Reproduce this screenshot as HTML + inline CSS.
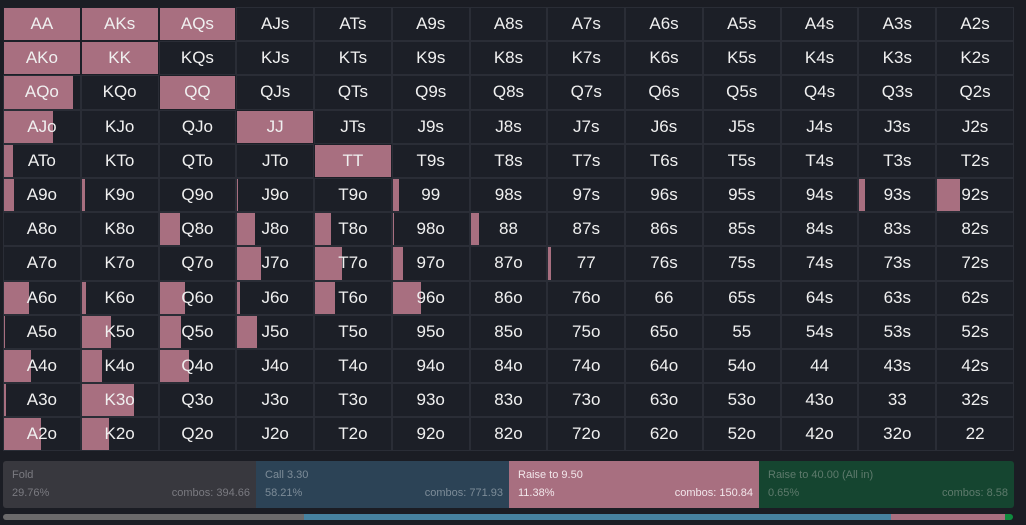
<!DOCTYPE html>
<html><head><meta charset="utf-8"><style>
body{margin:0;width:1026px;height:525px;background:#1b1d24;overflow:hidden;font-family:"Liberation Sans",sans-serif;position:relative}
.g{position:absolute;left:3px;top:7px;display:grid;grid-template-columns:repeat(13,77.77px);grid-template-rows:repeat(13,34.2px)}
.g div{position:relative;box-sizing:border-box;border:1px solid #2a2d36;background:#1c1f27;color:#f0f0f0;font-size:17px;line-height:32px;text-align:center;overflow:hidden}
.g div i{position:absolute;left:-1px;top:-1px;bottom:-1px;background:#a86f80}
.g div b{position:relative;font-weight:normal}
.f{background:#a86f80 !important;border-color:#1c1f27 !important}
.p{position:absolute;top:461px;height:47px;font-size:11px}
.p .t{position:absolute;left:9px;top:8px}.p .l{position:absolute;left:9px;top:26px}.p .r{position:absolute;right:6px;top:26px}
.bar{position:absolute;top:514px;height:6px}
</style></head><body>
<div class="g">
<div class="f"><b>AA</b></div><div class="f"><b>AKs</b></div><div class="f"><b>AQs</b></div><div><b>AJs</b></div><div><b>ATs</b></div><div><b>A9s</b></div><div><b>A8s</b></div><div><b>A7s</b></div><div><b>A6s</b></div><div><b>A5s</b></div><div><b>A4s</b></div><div><b>A3s</b></div><div><b>A2s</b></div>
<div class="f"><b>AKo</b></div><div class="f"><b>KK</b></div><div><b>KQs</b></div><div><b>KJs</b></div><div><b>KTs</b></div><div><b>K9s</b></div><div><b>K8s</b></div><div><b>K7s</b></div><div><b>K6s</b></div><div><b>K5s</b></div><div><b>K4s</b></div><div><b>K3s</b></div><div><b>K2s</b></div>
<div><i style="width:70px"></i><b>AQo</b></div><div><b>KQo</b></div><div class="f"><b>QQ</b></div><div><b>QJs</b></div><div><b>QTs</b></div><div><b>Q9s</b></div><div><b>Q8s</b></div><div><b>Q7s</b></div><div><b>Q6s</b></div><div><b>Q5s</b></div><div><b>Q4s</b></div><div><b>Q3s</b></div><div><b>Q2s</b></div>
<div><i style="width:50px"></i><b>AJo</b></div><div><b>KJo</b></div><div><b>QJo</b></div><div class="f"><b>JJ</b></div><div><b>JTs</b></div><div><b>J9s</b></div><div><b>J8s</b></div><div><b>J7s</b></div><div><b>J6s</b></div><div><b>J5s</b></div><div><b>J4s</b></div><div><b>J3s</b></div><div><b>J2s</b></div>
<div><i style="width:10px"></i><b>ATo</b></div><div><b>KTo</b></div><div><b>QTo</b></div><div><b>JTo</b></div><div class="f"><b>TT</b></div><div><b>T9s</b></div><div><b>T8s</b></div><div><b>T7s</b></div><div><b>T6s</b></div><div><b>T5s</b></div><div><b>T4s</b></div><div><b>T3s</b></div><div><b>T2s</b></div>
<div><i style="width:11px"></i><b>A9o</b></div><div><i style="width:4px"></i><b>K9o</b></div><div><b>Q9o</b></div><div><i style="width:2px"></i><b>J9o</b></div><div><b>T9o</b></div><div><i style="width:7px"></i><b>99</b></div><div><b>98s</b></div><div><b>97s</b></div><div><b>96s</b></div><div><b>95s</b></div><div><b>94s</b></div><div><i style="width:7px"></i><b>93s</b></div><div><i style="width:24px"></i><b>92s</b></div>
<div><b>A8o</b></div><div><b>K8o</b></div><div><i style="width:21px"></i><b>Q8o</b></div><div><i style="width:19px"></i><b>J8o</b></div><div><i style="width:17px"></i><b>T8o</b></div><div><i style="width:2px"></i><b>98o</b></div><div><i style="width:9px"></i><b>88</b></div><div><b>87s</b></div><div><b>86s</b></div><div><b>85s</b></div><div><b>84s</b></div><div><b>83s</b></div><div><b>82s</b></div>
<div><b>A7o</b></div><div><b>K7o</b></div><div><b>Q7o</b></div><div><i style="width:25px"></i><b>J7o</b></div><div><i style="width:28px"></i><b>T7o</b></div><div><i style="width:11px"></i><b>97o</b></div><div><b>87o</b></div><div><i style="width:4px"></i><b>77</b></div><div><b>76s</b></div><div><b>75s</b></div><div><b>74s</b></div><div><b>73s</b></div><div><b>72s</b></div>
<div><i style="width:26px"></i><b>A6o</b></div><div><i style="width:5px"></i><b>K6o</b></div><div><i style="width:26px"></i><b>Q6o</b></div><div><i style="width:4px"></i><b>J6o</b></div><div><i style="width:21px"></i><b>T6o</b></div><div><i style="width:29px"></i><b>96o</b></div><div><b>86o</b></div><div><b>76o</b></div><div><b>66</b></div><div><b>65s</b></div><div><b>64s</b></div><div><b>63s</b></div><div><b>62s</b></div>
<div><i style="width:2px"></i><b>A5o</b></div><div><i style="width:30px"></i><b>K5o</b></div><div><i style="width:22px"></i><b>Q5o</b></div><div><i style="width:21px"></i><b>J5o</b></div><div><b>T5o</b></div><div><b>95o</b></div><div><b>85o</b></div><div><b>75o</b></div><div><b>65o</b></div><div><b>55</b></div><div><b>54s</b></div><div><b>53s</b></div><div><b>52s</b></div>
<div><i style="width:28px"></i><b>A4o</b></div><div><i style="width:21px"></i><b>K4o</b></div><div><i style="width:30px"></i><b>Q4o</b></div><div><b>J4o</b></div><div><b>T4o</b></div><div><b>94o</b></div><div><b>84o</b></div><div><b>74o</b></div><div><b>64o</b></div><div><b>54o</b></div><div><b>44</b></div><div><b>43s</b></div><div><b>42s</b></div>
<div><i style="width:3px"></i><b>A3o</b></div><div><i style="width:53px"></i><b>K3o</b></div><div><b>Q3o</b></div><div><b>J3o</b></div><div><b>T3o</b></div><div><b>93o</b></div><div><b>83o</b></div><div><b>73o</b></div><div><b>63o</b></div><div><b>53o</b></div><div><b>43o</b></div><div><b>33</b></div><div><b>32s</b></div>
<div><i style="width:38px"></i><b>A2o</b></div><div><i style="width:28px"></i><b>K2o</b></div><div><b>Q2o</b></div><div><b>J2o</b></div><div><b>T2o</b></div><div><b>92o</b></div><div><b>82o</b></div><div><b>72o</b></div><div><b>62o</b></div><div><b>52o</b></div><div><b>42o</b></div><div><b>32o</b></div><div><b>22</b></div>
</div>
<div class="p" style="left:3px;width:253px;background:#38383e;color:#7a7a80;border-radius:3px 0 0 3px"><span class="t">Fold</span><span class="l">29.76%</span><span class="r">combos: 394.66</span></div>
<div class="p" style="left:256px;width:253px;background:#2c4356;color:#7d8c98"><span class="t">Call 3.30</span><span class="l">58.21%</span><span class="r">combos: 771.93</span></div>
<div class="p" style="left:509px;width:250px;background:#a86f80;color:#f2e6ea"><span class="t">Raise to 9.50</span><span class="l">11.38%</span><span class="r">combos: 150.84</span></div>
<div class="p" style="left:759px;width:255px;background:#154530;color:#5e7a6c;border-radius:0 3px 3px 0"><span class="t">Raise to 40.00 (All in)</span><span class="l">0.65%</span><span class="r">combos: 8.58</span></div>
<div class="bar" style="left:3px;width:301px;background:#6b6a6b;border-radius:3px 0 0 3px"></div>
<div class="bar" style="left:304px;width:587px;background:#4682a0"></div>
<div class="bar" style="left:891px;width:114px;background:#a86f80"></div>
<div class="bar" style="left:1005px;width:8px;background:#0f8a3e;border-radius:0 3px 3px 0"></div>
</body></html>
